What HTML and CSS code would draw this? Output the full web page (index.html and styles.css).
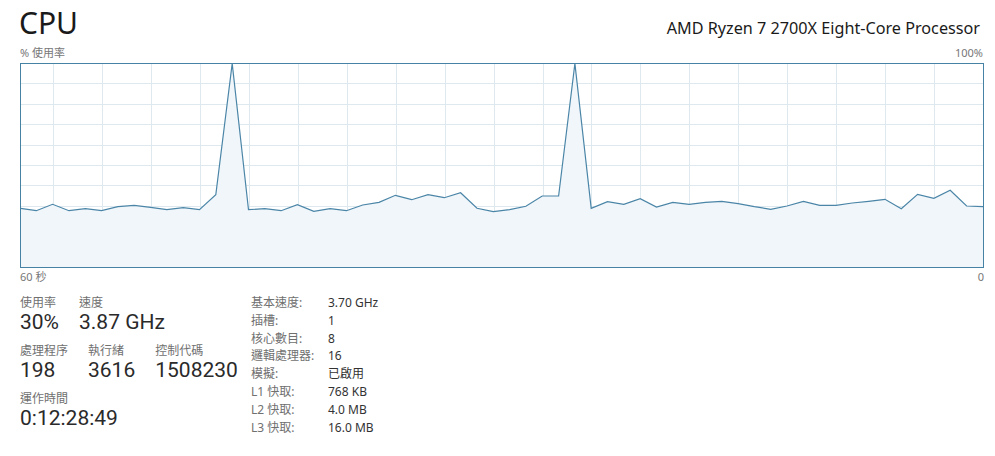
FILE: index.html
```html
<!DOCTYPE html>
<html lang="zh-Hant">
<head>
    <meta charset="UTF-8">
    <title>CPU</title>
    <link rel="stylesheet" href="styles.css">
</head>
<body>
<div class="page">
    <div class="header">
        <div class="title">CPU</div>
        <div class="cpu-name">AMD Ryzen 7 2700X Eight-Core Processor</div>
    </div>
    <div class="axis-row axis-top">
        <span>% 使用率</span>
        <span>100%</span>
    </div>
    <svg class="graph" width="964" height="205" viewBox="0 0 964 205">
        <path class="grid" d="M33.5 0V205M82.5 0V205M131.5 0V205M180.5 0V205M229.5 0V205M278.5 0V205M327.5 0V205M376.5 0V205M425.5 0V205M474.5 0V205M523.5 0V205M571.5 0V205M620.5 0V205M669.5 0V205M718.5 0V205M767.5 0V205M816.5 0V205M865.5 0V205M914.5 0V205
            M0 20.5H964M0 41.5H964M0 61.5H964M0 82.5H964M0 102.5H964M0 122.5H964M0 143.5H964M0 163.5H964M0 184.5H964"/>
        <polygon class="area" points="0.5,204.5 0.5,145.3 16.3,147.7 32.6,141.3 49,147.7 65.3,145.7 81.6,147.7 97.9,143.7 114.2,142.3 130.6,144.3 146.9,146.7 163.2,144.7 179.5,146.7 195.8,131.7 212.2,0.5 228.5,146.7 244.8,145.7 261.1,147.7 277.4,141.7 293.8,148.3 310.1,145.7 326.4,147.7 342.7,142 359,139.3 375.4,132.3 391.7,136.7 408,131.7 424.3,134.7 440.6,129.7 457,145.3 473.3,148.7 489.6,146.7 505.9,143.3 522.2,133 538.6,133 554.9,0.5 571.2,145.3 587.5,138.7 603.8,141.3 620.2,135.7 636.5,144 652.8,139.3 669.1,141.3 685.4,139.3 701.8,138.3 718.1,140.7 734.4,143.7 750.7,146.3 767,143 783.4,138.3 799.7,142.3 816,142.3 832.3,140 848.6,138.3 865,136.3 881.3,145.7 897.6,131.3 913.9,135.3 930.2,127.3 946.6,143 963,143.7 963,204.5"/>
        <polyline class="line" points="0.5,145.3 16.3,147.7 32.6,141.3 49,147.7 65.3,145.7 81.6,147.7 97.9,143.7 114.2,142.3 130.6,144.3 146.9,146.7 163.2,144.7 179.5,146.7 195.8,131.7 212.2,0.5 228.5,146.7 244.8,145.7 261.1,147.7 277.4,141.7 293.8,148.3 310.1,145.7 326.4,147.7 342.7,142 359,139.3 375.4,132.3 391.7,136.7 408,131.7 424.3,134.7 440.6,129.7 457,145.3 473.3,148.7 489.6,146.7 505.9,143.3 522.2,133 538.6,133 554.9,0.5 571.2,145.3 587.5,138.7 603.8,141.3 620.2,135.7 636.5,144 652.8,139.3 669.1,141.3 685.4,139.3 701.8,138.3 718.1,140.7 734.4,143.7 750.7,146.3 767,143 783.4,138.3 799.7,142.3 816,142.3 832.3,140 848.6,138.3 865,136.3 881.3,145.7 897.6,131.3 913.9,135.3 930.2,127.3 946.6,143 963,143.7"/>
        <rect class="frame" x="0.5" y="0.5" width="963" height="204"/>
    </svg>
    <div class="axis-row axis-bottom">
        <span>60 秒</span>
        <span>0</span>
    </div>

    <div class="details">
        <div class="stats">
            <div class="stat-row">
                <div class="stat">
                    <div class="stat-label">使用率</div>
                    <div class="stat-value">30%</div>
                </div>
                <div class="stat">
                    <div class="stat-label">速度</div>
                    <div class="stat-value">3.87 GHz</div>
                </div>
            </div>
            <div class="stat-row">
                <div class="stat">
                    <div class="stat-label">處理程序</div>
                    <div class="stat-value">198</div>
                </div>
                <div class="stat">
                    <div class="stat-label">執行緒</div>
                    <div class="stat-value">3616</div>
                </div>
                <div class="stat">
                    <div class="stat-label">控制代碼</div>
                    <div class="stat-value">1508230</div>
                </div>
            </div>
            <div class="stat-row">
                <div class="stat">
                    <div class="stat-label">運作時間</div>
                    <div class="stat-value">0:12:28:49</div>
                </div>
            </div>
        </div>

        <div class="specs">
            <span class="spec-name">基本速度:</span><span>3.70 GHz</span>
            <span class="spec-name">插槽:</span><span>1</span>
            <span class="spec-name">核心數目:</span><span>8</span>
            <span class="spec-name">邏輯處理器:</span><span>16</span>
            <span class="spec-name">模擬:</span><span>已啟用</span>
            <span class="spec-name">L1 快取:</span><span>768 KB</span>
            <span class="spec-name">L2 快取:</span><span>4.0 MB</span>
            <span class="spec-name">L3 快取:</span><span>16.0 MB</span>
        </div>
    </div>
</div>
</body>
</html>
```

FILE: styles.css
```css
body {
    margin: 0;
    background: #ffffff;
    color: #1a1a1a;
    font-family: "Noto Sans", "Noto Sans CJK TC", sans-serif;
}

.page {
    padding: 6px 12px 0 20px;
}

.header {
    display: flex;
    justify-content: space-between;
    align-items: baseline;
    height: 40px;
}

.title {
    font-size: 30px;
    line-height: 34px;
    margin-left: -1px;
}

.cpu-name {
    font-size: 16.2px;
    line-height: 20px;
    margin-right: 3px;
}

.axis-row {
    display: flex;
    justify-content: space-between;
    font-size: 11px;
    line-height: 14px;
    color: #777777;
}

.axis-top {
    height: 17px;
}

.axis-bottom {
    margin-top: 2px;
    margin-right: -1px;
}

.graph {
    display: block;
}

.grid {
    fill: none;
    stroke: #dde8ef;
    stroke-width: 1;
}

.area {
    fill: #f1f6fa;
}

.line {
    fill: none;
    stroke: #4a85a7;
    stroke-width: 1.2;
}

.frame {
    fill: none;
    stroke: #4682a4;
    stroke-width: 1;
}

.details {
    display: flex;
    margin-top: 12px;
}

.stats {
    width: 231px;
}

.stat-row {
    display: flex;
    gap: 20px;
    margin-bottom: 10px;
}

.stat-label {
    font-family: "Liberation Sans", "Noto Sans CJK TC", sans-serif;
    font-size: 12px;
    line-height: 14px;
    color: #707070;
}

.stat-value {
    font-family: Roboto, "Noto Sans", sans-serif;
    font-size: 21px;
    line-height: 24px;
    color: #2a2a2a;
}

.specs {
    display: grid;
    grid-template-columns: 77px auto;
    grid-auto-rows: 17.8px;
    align-content: start;
    font-size: 12px;
    line-height: 17.8px;
    margin-top: -2px;
    color: #333333;
}

.specs .spec-name {
    color: #707070;
}
```
